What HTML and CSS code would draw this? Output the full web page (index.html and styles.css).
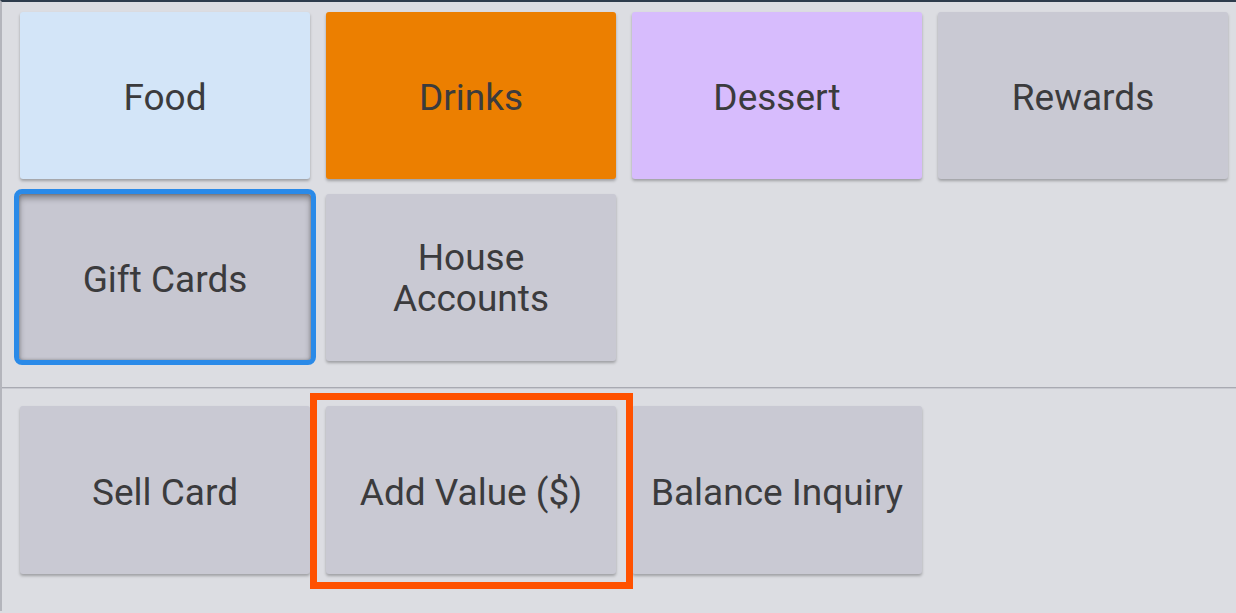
FILE: index.html
```html
<!DOCTYPE html>
<html>
<head>
<meta charset="utf-8">
<link rel="stylesheet" href="styles.css">
</head>
<body>
<div class="screen">
  <div class="grid top">
    <div class="btn food">Food</div>
    <div class="btn drinks">Drinks</div>
    <div class="btn dessert">Dessert</div>
    <div class="btn">Rewards</div>
    <div class="btn selected">Gift Cards</div>
    <div class="btn two-line">House<br>Accounts</div>
  </div>
  <div class="divider"></div>
  <div class="grid bottom">
    <div class="btn">Sell Card</div>
    <div class="btn highlighted">Add Value ($)<span class="mark"></span></div>
    <div class="btn">Balance Inquiry</div>
  </div>
</div>
</body>
</html>
```
FILE: styles.css
```css
html, body {
  margin: 0;
  padding: 0;
}
body {
  width: 1236px;
  height: 613px;
  overflow: hidden;
  background: #dcdde2;
  font-family: Roboto, "Noto Sans", sans-serif;
}
.screen {
  height: 611px;
  border-top: 2px solid #2e3c4c;
  border-left: 2px solid #b4b5bc;
  box-sizing: border-box;
  background: #dcdde2;
}
.grid {
  display: grid;
  grid-template-columns: repeat(4, 1fr);
  column-gap: 16px;
  width: 1208px;
}
.top {
  padding: 10px 0 0 18px;
  grid-auto-rows: 167px;
  row-gap: 15px;
}
.divider {
  margin-top: 26px;
  height: 1px;
  background: #a9aab2;
  border-bottom: 1px solid #c8c9d0;
}
.bottom {
  padding: 17px 0 0 18px;
  grid-auto-rows: 168px;
}
.btn {
  position: relative;
  display: flex;
  align-items: center;
  justify-content: center;
  text-align: center;
  padding-top: 4px;
  box-sizing: border-box;
  background: #c9c9d3;
  color: #3b3b3d;
  font-size: 37px;
  line-height: 41px;
  border-radius: 3px;
  box-shadow: 0 2px 3px rgba(0, 0, 0, 0.28);
}
.two-line { padding-top: 0; }
.food { background: #d3e5f8; }
.drinks { background: #ec7f00; }
.dessert { background: #d7bcfd; }
.selected {
  margin: -5px -6px -4px -6px;
  border: 5px solid #2a8ae8;
  border-radius: 8px;
  box-shadow: inset 0 4px 6px rgba(0, 0, 0, 0.35), inset 0 0 3px rgba(0, 0, 0, 0.3);
  background: #c7c7d1;
}
.mark {
  position: absolute;
  top: -13px;
  left: -16px;
  right: -17px;
  bottom: -15px;
  border: 7px solid #ff5100;
  z-index: 2;
  pointer-events: none;
}
.highlighted { z-index: 2; }
```
